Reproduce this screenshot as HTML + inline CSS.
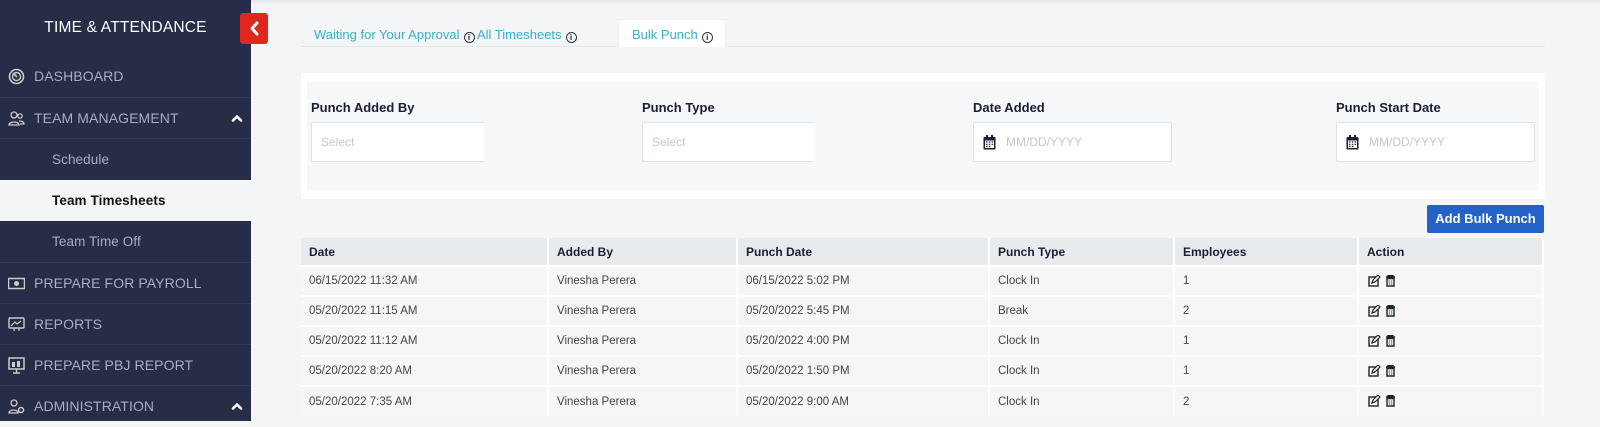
<!DOCTYPE html>
<html><head><meta charset="utf-8"><style>
*{box-sizing:border-box;margin:0;padding:0}
body{width:1600px;height:421px;overflow:hidden;background:#f4f5f7;font-family:"Liberation Sans",sans-serif;position:relative}
.top{position:absolute;left:251px;top:0;right:0;height:6px;background:linear-gradient(#e6e7ea,#f4f5f7)}
.sb{position:absolute;left:0;top:0;width:251px;height:421px;background:#282d47}
.title{position:absolute;left:0;width:251px;top:19px;text-align:center;color:#fff;font-size:15.5px;letter-spacing:0.2px}
.tog{position:absolute;left:240px;top:13px;width:28px;height:31px;background:#e1271d;border-radius:3px}
.item{position:absolute;left:0;width:251px;height:41px;border-top:1px solid #353a55;color:#a9adbd;font-size:14px;line-height:41px;padding-left:34px;letter-spacing:0.1px}
.sub{padding-left:52px;font-size:13.5px}
.act{background:#f4f5f7;color:#111;font-weight:bold;width:256px;border:none}
.ic{position:absolute;left:8px;top:12px;width:17px;height:17px}
.car{position:absolute;left:231px;top:16px;width:12px;height:8px}
.tabs{position:absolute;left:301px;top:20px;width:1244px;height:27px;border-bottom:1px solid #e3e5e9}
.tab{position:absolute;top:0;height:27px;color:#35b1c9;font-size:13px;line-height:30px;white-space:nowrap}
.tab i{display:inline-block;width:11px;height:11px;border:1px solid #333;border-radius:50%;font-size:8px;color:#222;line-height:9px;text-align:center;font-style:normal;font-weight:bold;margin-left:4px;vertical-align:-1px}
.card{position:absolute;left:301px;top:73px;width:1244px;height:126px;background:#fff}
.inner{position:absolute;left:6px;top:9px;width:1232px;height:108px;background:#f6f7f9}
.lbl{position:absolute;top:100px;font-size:13px;font-weight:bold;color:#1b1d36}
.inp{position:absolute;top:122px;height:40px;background:#fff;border:1px solid #dde2e8;border-radius:2px;font-size:12px;color:#c4c6cc;line-height:38px;padding-left:9px}
.cal{display:inline-block;vertical-align:middle;margin:0 10px 0 0}
.btn{position:absolute;left:1427px;top:205px;width:117px;height:28px;background:#2362c7;border-radius:2px;color:#fff;font-weight:bold;font-size:13px;text-align:center;line-height:28px}
table{position:absolute;left:301px;top:238px;width:1243px;border-collapse:collapse;font-size:11.5px}
th{background:#e8ebed;height:28px;text-align:left;font-weight:bold;color:#1b1d36;padding-left:8px;border-right:2px solid #fff;font-size:12px}
td{background:#f6f6f6;height:30px;padding-left:8px;color:#444;border-right:2px solid #fff;border-top:2px solid #fff}
</style></head><body>
<div class="top"></div>
<div class="sb">
<div class="title">TIME &amp; ATTENDANCE</div>
<div class="item" style="top:56px;border:none"><svg class="ic" viewBox="0 0 17 17"><circle cx="8.5" cy="8.5" r="7" fill="none" stroke="#ccc" stroke-width="1.6"/><circle cx="8.5" cy="8.5" r="4" fill="none" stroke="#ccc" stroke-width="1.4"/><path d="M5 5l4 4" stroke="#ccc" stroke-width="1.6"/></svg>DASHBOARD</div>
<div class="item" style="top:97px"><svg class="ic" viewBox="0 0 17 17"><circle cx="6" cy="5" r="3" fill="none" stroke="#ccc" stroke-width="1.3"/><circle cx="12" cy="6" r="2.2" fill="none" stroke="#ccc" stroke-width="1.2"/><path d="M1 15c0-4 10-4 10 0z" fill="none" stroke="#ccc" stroke-width="1.3"/><path d="M11 11c3 0 5 1 5 3h-4" fill="none" stroke="#ccc" stroke-width="1.2"/></svg>TEAM MANAGEMENT<svg class="car" viewBox="0 0 12 8"><path d="M2 6.5l4-4 4 4" stroke="#fff" stroke-width="2.6" fill="none" stroke-linecap="round" stroke-linejoin="round"/></svg></div>
<div class="item sub" style="top:138px">Schedule</div>
<div class="item sub act" style="top:180px">Team Timesheets</div>
<div class="item sub" style="top:221px;border:none">Team Time Off</div>
<div class="item" style="top:262px"><svg class="ic" viewBox="0 0 17 17"><rect x="0.5" y="3.5" width="16" height="10" fill="none" stroke="#ccc" stroke-width="1.5"/><circle cx="8.5" cy="8.5" r="2.5" fill="#ccc"/></svg>PREPARE FOR PAYROLL</div>
<div class="item" style="top:303px"><svg class="ic" viewBox="0 0 17 17"><rect x="1" y="2" width="15" height="10" rx="1" fill="none" stroke="#ccc" stroke-width="1.4"/><path d="M3 10l4-4 2 2 4-3M6 12v3M11 12v3" stroke="#ccc" stroke-width="1.2" fill="none"/></svg>REPORTS</div>
<div class="item" style="top:344px"><svg class="ic" viewBox="0 0 17 17"><rect x="1" y="1" width="15" height="11" fill="none" stroke="#ccc" stroke-width="1.5"/><rect x="4" y="5" width="3" height="5" fill="#ccc"/><rect x="9" y="4" width="3" height="6" fill="#ccc"/><path d="M8.5 12v4M5 16h7" stroke="#ccc" stroke-width="1.4"/></svg>PREPARE PBJ REPORT</div>
<div class="item" style="top:385px"><svg class="ic" viewBox="0 0 17 17"><circle cx="6" cy="5" r="3" fill="none" stroke="#ccc" stroke-width="1.3"/><path d="M1 15c0-4 9-4 9 0z" fill="none" stroke="#ccc" stroke-width="1.3"/><circle cx="13" cy="12" r="2.5" fill="none" stroke="#ccc" stroke-width="1.5"/></svg>ADMINISTRATION<svg class="car" viewBox="0 0 12 8"><path d="M2 6.5l4-4 4 4" stroke="#fff" stroke-width="2.6" fill="none" stroke-linecap="round" stroke-linejoin="round"/></svg></div>
</div>
<div class="tog"><svg width="28" height="31" viewBox="0 0 28 31"><path d="M17 10l-5 5.5 5 5.5" stroke="#fff" stroke-width="3" fill="none" stroke-linecap="round" stroke-linejoin="round"/></svg></div>

<div class="tabs">
<div class="tab" style="left:13px">Waiting for Your Approval<i>i</i></div>
<div class="tab" style="left:176px">All Timesheets<i>i</i></div>
<div class="tab" style="left:317px;width:108px;background:#fff;padding-left:13px;height:28px;border:1px solid #eceef1;border-bottom:none;top:-1px">Bulk Punch<i>i</i></div>
</div>

<div class="card"><div class="inner"></div></div>
<div class="lbl" style="left:311px">Punch Added By</div>
<div class="lbl" style="left:642px">Punch Type</div>
<div class="lbl" style="left:973px">Date Added</div>
<div class="lbl" style="left:1336px">Punch Start Date</div>
<div class="inp" style="left:311px;width:173px;border-right:none">Select</div>
<div class="inp" style="left:642px;width:173px;border-right:none">Select</div>
<div class="inp" style="left:973px;width:199px"><svg class="cal" width="13" height="15" viewBox="0 0 13 15"><rect x="0.5" y="2" width="12" height="12.5" rx="1" fill="#1b1d36"/><rect x="2" y="5.5" width="9" height="7.5" fill="#fff"/><rect x="3" y="0" width="2" height="3" fill="#1b1d36"/><rect x="8" y="0" width="2" height="3" fill="#1b1d36"/><path d="M3 7h1.5M5.8 7h1.5M8.6 7h1.5M3 9.3h1.5M5.8 9.3h1.5M8.6 9.3h1.5M3 11.5h1.5M5.8 11.5h1.5" stroke="#1b1d36" stroke-width="1.2"/></svg>MM/DD/YYYY</div>
<div class="inp" style="left:1336px;width:199px"><svg class="cal" width="13" height="15" viewBox="0 0 13 15"><rect x="0.5" y="2" width="12" height="12.5" rx="1" fill="#1b1d36"/><rect x="2" y="5.5" width="9" height="7.5" fill="#fff"/><rect x="3" y="0" width="2" height="3" fill="#1b1d36"/><rect x="8" y="0" width="2" height="3" fill="#1b1d36"/><path d="M3 7h1.5M5.8 7h1.5M8.6 7h1.5M3 9.3h1.5M5.8 9.3h1.5M8.6 9.3h1.5M3 11.5h1.5M5.8 11.5h1.5" stroke="#1b1d36" stroke-width="1.2"/></svg>MM/DD/YYYY</div>
<div class="btn">Add Bulk Punch</div>

<table>
<tr><th style="width:247px">Date</th><th style="width:189px">Added By</th><th style="width:252px">Punch Date</th><th style="width:185px">Punch Type</th><th style="width:184px">Employees</th><th>Action</th></tr>
<tr><td>06/15/2022 11:32 AM</td><td>Vinesha Perera</td><td>06/15/2022 5:02 PM</td><td>Clock In</td><td>1</td><td>ACT</td></tr>
<tr><td>05/20/2022 11:15 AM</td><td>Vinesha Perera</td><td>05/20/2022 5:45 PM</td><td>Break</td><td>2</td><td>ACT</td></tr>
<tr><td>05/20/2022 11:12 AM</td><td>Vinesha Perera</td><td>05/20/2022 4:00 PM</td><td>Clock In</td><td>1</td><td>ACT</td></tr>
<tr><td>05/20/2022 8:20 AM</td><td>Vinesha Perera</td><td>05/20/2022 1:50 PM</td><td>Clock In</td><td>1</td><td>ACT</td></tr>
<tr><td>05/20/2022 7:35 AM</td><td>Vinesha Perera</td><td>05/20/2022 9:00 AM</td><td>Clock In</td><td>2</td><td>ACT</td></tr>
</table>
<script>
document.querySelectorAll('td').forEach(function(t){if(t.textContent==='ACT'){t.innerHTML='<svg width="32" height="12" viewBox="0 0 32 12" style="vertical-align:middle;margin-left:1px"><rect x="1" y="2" width="9" height="9" fill="none" stroke="#222" stroke-width="1.4"/><path d="M4 8l1-3 5-5 2 2-5 5z" fill="#fff" stroke="#222" stroke-width="1.2"/><path d="M18 2h9M20 2v-1.5h5V2M19 3.5h7V11h-7z" fill="none" stroke="#222" stroke-width="1.4"/><path d="M21.3 5v5M23.7 5v5" stroke="#2aa" stroke-width="1"/></svg>';}});
</script>
</body></html>
